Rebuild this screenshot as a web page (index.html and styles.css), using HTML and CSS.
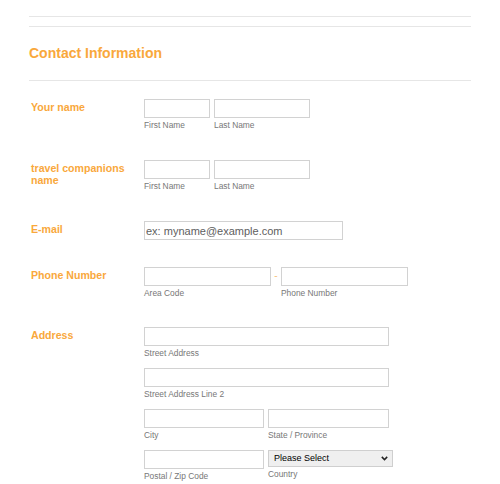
FILE: index.html
```html
<!DOCTYPE html>
<html>
<head>
<meta charset="utf-8">
<link rel="stylesheet" href="styles.css">
</head>
<body>
<div class="form">
  <div class="rule rule-top"></div>
  <div class="rule rule-second"></div>
  <h2 class="heading">Contact Information</h2>
  <div class="rule rule-head"></div>

  <div class="row row-first">
    <div class="label">Your name</div>
    <div class="fields">
      <div class="line">
        <div class="sub"><input class="input w-first" type="text"><div class="sublabel">First Name</div></div>
        <div class="sub"><input class="input w-last" type="text"><div class="sublabel">Last Name</div></div>
      </div>
    </div>
  </div>

  <div class="row">
    <div class="label">travel companions name</div>
    <div class="fields">
      <div class="line">
        <div class="sub"><input class="input w-first" type="text"><div class="sublabel">First Name</div></div>
        <div class="sub"><input class="input w-last" type="text"><div class="sublabel">Last Name</div></div>
      </div>
    </div>
  </div>

  <div class="row">
    <div class="label">E-mail</div>
    <div class="fields">
      <input class="input w-email" type="text" value="ex: myname@example.com">
    </div>
  </div>

  <div class="row row-phone">
    <div class="label">Phone Number</div>
    <div class="fields">
      <div class="line line-phone">
        <div class="sub"><input class="input w-phone" type="text"><div class="sublabel">Area Code</div></div>
        <span class="dash">-</span>
        <div class="sub"><input class="input w-phone" type="text"><div class="sublabel">Phone Number</div></div>
      </div>
    </div>
  </div>

  <div class="row row-address">
    <div class="label">Address</div>
    <div class="fields address">
      <div class="sub"><input class="input w-street" type="text"><div class="sublabel">Street Address</div></div>
      <div class="sub"><input class="input w-street" type="text"><div class="sublabel">Street Address Line 2</div></div>
      <div class="line">
        <div class="sub"><input class="input w-city" type="text"><div class="sublabel">City</div></div>
        <div class="sub"><input class="input w-state" type="text"><div class="sublabel">State / Province</div></div>
      </div>
      <div class="line">
        <div class="sub"><input class="input w-city" type="text"><div class="sublabel">Postal / Zip Code</div></div>
        <div class="sub">
          <div class="select-wrap">
            <select class="select"><option>Please Select</option></select>
            <svg class="chevron" width="7" height="5" viewBox="0 0 7 5"><path d="M0.8 0.9 L3.5 3.6 L6.2 0.9" fill="none" stroke="#222" stroke-width="1.5"/></svg>
          </div>
          <div class="sublabel">Country</div>
        </div>
      </div>
    </div>
  </div>
</div>
</body>
</html>
```
FILE: styles.css
```css
html, body {
  margin: 0;
  padding: 0;
  background: #ffffff;
}

body {
  font-family: "Liberation Sans", Arial, sans-serif;
}

.form {
  padding-left: 29px;
  width: 442px;
}

.rule {
  border-top: 1px solid #e6e6e6;
}

.rule-top {
  margin-top: 16px;
}

.rule-second {
  margin-top: 9px;
}

.heading {
  margin: 18px 0 0 0;
  font-size: 14px;
  line-height: 16px;
  font-weight: bold;
  color: #f9a83c;
}

.rule-head {
  margin-top: 19px;
}

.row {
  display: flex;
  margin-top: 30px;
}

.row-first {
  margin-top: 18px;
}

.row-phone {
  margin-top: 27px;
}

.row-address {
  margin-top: 29px;
}

.label {
  flex: 0 0 115px;
  box-sizing: border-box;
  padding-left: 2px;
  padding-right: 8px;
  padding-top: 2px;
  font-size: 10.6px;
  line-height: 12px;
  font-weight: bold;
  color: #f9a83c;
}

.fields {
  display: flex;
  flex-direction: column;
}

.address {
  gap: 10px;
}

.line {
  display: flex;
  gap: 4px;
}

.line-phone {
  gap: 0;
}

.sub {
  display: flex;
  flex-direction: column;
}

.input {
  display: block;
  box-sizing: border-box;
  height: 19px;
  margin: 0;
  padding: 0 1px;
  border: 1px solid #d2d2d2;
  border-radius: 0;
  background: #ffffff;
  font-family: "Liberation Sans", Arial, sans-serif;
  font-size: 11px;
  color: #5e5e5e;
  outline: none;
}

.w-first { width: 66px; }
.w-last { width: 96px; }
.w-email { width: 199px; }
.w-phone { width: 127px; }
.w-street { width: 245px; }
.w-city { width: 120px; }
.w-state { width: 121px; }

.dash {
  width: 10px;
  height: 19px;
  line-height: 17px;
  text-align: center;
  font-size: 10px;
  color: #f6c27e;
}

.sublabel {
  margin-top: 2px;
  font-size: 8.4px;
  line-height: 10px;
  color: #777777;
  white-space: nowrap;
}

.select-wrap {
  position: relative;
  width: 125px;
  height: 17px;
}

.select {
  display: block;
  box-sizing: border-box;
  width: 125px;
  height: 17px;
  margin: 0;
  padding: 0 0 0 5px;
  border: 1px solid #cfcfcf;
  border-radius: 0;
  background: #efefef;
  -webkit-appearance: none;
  appearance: none;
  font-family: "Liberation Sans", Arial, sans-serif;
  font-size: 9px;
  line-height: 15px;
  color: #000000;
}

.chevron {
  position: absolute;
  right: 5px;
  top: 6px;
}
```
